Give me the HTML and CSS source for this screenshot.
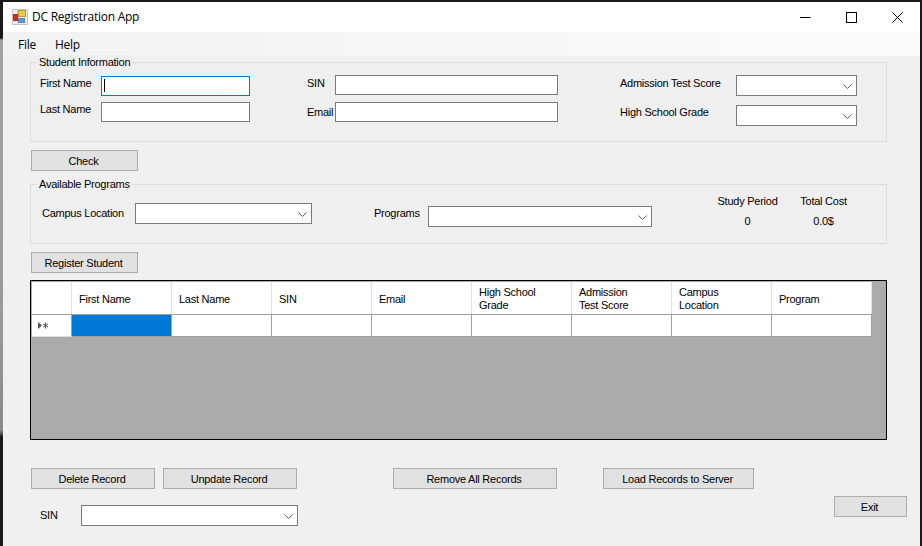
FILE: index.html
```html
<!DOCTYPE html>
<html lang="en">
<head>
<meta charset="utf-8">
<title>DC Registration App</title>
<link rel="stylesheet" href="styles.css">
</head>
<body>
<div class="desktop">
  <div class="strip-left"></div>
  <div class="window">
    <header class="titlebar">
      <svg class="app-icon" width="16" height="16" viewBox="0 0 16 16">
        <path d="M0.500 0.500h15v15h-15zM0.500 5.500h4M5.500 0.500v4M0.500 10.500h4M5.500 15.500v-2" stroke="#c4c4c4" fill="#eee"/>
        <rect x="1.500" y="5.500" width="4" height="6" fill="#d8261c" stroke="#a8302a"/>
        <rect x="6.500" y="1.500" width="7" height="6" fill="#f7c93e" stroke="#b89a3e"/>
        <rect x="6.500" y="9.500" width="6" height="4" fill="#5c9ae0" stroke="#5c86b8"/>
      </svg>
      <span class="app-title">DC Registration App</span>
      <div class="controls">
        <div class="control"><svg width="11" height="11" viewBox="0 0 11 11"><path d="M0 5.500h10.500" stroke="#000" fill="none"/></svg></div>
        <div class="control"><svg width="11" height="11" viewBox="0 0 11 11"><rect x="0.500" y="0.500" width="10" height="10" stroke="#000" fill="none"/></svg></div>
        <div class="control"><svg width="11" height="11" viewBox="0 0 11 11"><path d="M0.500 0.500l10 10M10.500 0.500l-10 10" stroke="#000" fill="none"/></svg></div>
      </div>
    </header>
    <nav class="menubar">
      <span class="menu-item">File</span>
      <span class="menu-item">Help</span>
    </nav>
    <main class="content">
      <section class="group group-student">
        <span class="group-title">Student Information</span>
        <div class="group-body">
          <div class="col col-name">
            <div class="field"><label class="lbl lbl-name">First Name</label><div class="textbox textbox-name is-focused"><span class="caret"></span></div></div>
            <div class="field"><label class="lbl lbl-name">Last Name</label><div class="textbox textbox-name"></div></div>
          </div>
          <div class="col col-contact">
            <div class="field"><label class="lbl lbl-contact lbl-raised">SIN</label><div class="textbox textbox-contact"></div></div>
            <div class="field"><label class="lbl lbl-contact lbl-center">Email</label><div class="textbox textbox-contact"></div></div>
          </div>
          <div class="col col-score">
            <div class="field"><label class="lbl lbl-score lbl-raised">Admission Test Score</label>
              <div class="combo combo-score"><svg class="chev" width="9" height="5" viewBox="0 0 9 5"><path d="M0.500 0.500l4 4 4-4" fill="none" stroke="#5a5a5a"/></svg></div></div>
            <div class="field"><label class="lbl lbl-score">High School Grade</label>
              <div class="combo combo-score"><svg class="chev" width="9" height="5" viewBox="0 0 9 5"><path d="M0.500 0.500l4 4 4-4" fill="none" stroke="#5a5a5a"/></svg></div></div>
          </div>
        </div>
      </section>

      <button class="btn btn-wide btn-check">Check</button>

      <section class="group group-programs">
        <span class="group-title">Available Programs</span>
        <div class="group-body">
          <div class="field field-campus"><label class="lbl lbl-campus">Campus Location</label>
            <div class="combo combo-campus"><svg class="chev" width="9" height="5" viewBox="0 0 9 5"><path d="M0.500 0.500l4 4 4-4" fill="none" stroke="#5a5a5a"/></svg></div></div>
          <div class="field field-programs"><label class="lbl lbl-programs">Programs</label>
            <div class="combo combo-programs"><svg class="chev" width="9" height="5" viewBox="0 0 9 5"><path d="M0.500 0.500l4 4 4-4" fill="none" stroke="#5a5a5a"/></svg></div></div>
          <div class="stat stat-period"><span>Study Period</span><span>0</span></div>
          <div class="stat stat-cost"><span>Total Cost</span><span>0.0$</span></div>
        </div>
      </section>

      <button class="btn btn-wide btn-register">Register Student</button>

      <section class="datagrid">
        <div class="dg-row dg-head">
          <div class="dg-rowhead"></div>
          <div class="dg-col dg-col-single">First Name</div>
          <div class="dg-col dg-col-single">Last Name</div>
          <div class="dg-col dg-col-single">SIN</div>
          <div class="dg-col dg-col-single">Email</div>
          <div class="dg-col">High School<br>Grade</div>
          <div class="dg-col">Admission<br>Test Score</div>
          <div class="dg-col">Campus<br>Location</div>
          <div class="dg-col dg-col-single">Program</div>
        </div>
        <div class="dg-row dg-data">
          <div class="dg-rowhead">
            <svg width="11" height="7" viewBox="0 0 11 7"><path d="M0 0l4 3.500-4 3.500z" fill="#555"/><path d="M7.500 0.500v6M5 2l5 3M10 2l-5 3" stroke="#555" fill="none"/></svg>
          </div>
          <div class="dg-cell is-selected"></div>
          <div class="dg-cell"></div>
          <div class="dg-cell"></div>
          <div class="dg-cell"></div>
          <div class="dg-cell"></div>
          <div class="dg-cell"></div>
          <div class="dg-cell"></div>
          <div class="dg-cell"></div>
        </div>
      </section>

      <div class="actions">
        <button class="btn btn-delete">Delete Record</button>
        <button class="btn btn-update">Unpdate Record</button>
        <button class="btn btn-remove">Remove All Records</button>
        <button class="btn btn-load">Load Records to Server</button>
      </div>

      <div class="footer">
        <div class="field field-sin"><label class="lbl lbl-sin">SIN</label>
          <div class="combo combo-sin"><svg class="chev" width="9" height="5" viewBox="0 0 9 5"><path d="M0.500 0.500l4 4 4-4" fill="none" stroke="#5a5a5a"/></svg></div></div>
        <button class="btn btn-exit">Exit</button>
      </div>
    </main>
  </div>
</div>
</body>
</html>
```
FILE: styles.css
```css
* { box-sizing: border-box; }
html, body { margin: 0; padding: 0; }
body {
  width: 922px;
  height: 546px;
  overflow: hidden;
  background: #1a1a1a;
  font-family: "Liberation Sans", Arial, sans-serif;
  font-size: 11px;
  letter-spacing: -0.25px;
  color: #000;
}
.desktop { display: flex; height: 546px; padding-top: 2px; padding-right: 2px; }
.strip-left {
  width: 3px;
  margin-top: -2px;
  background: linear-gradient(to bottom, #1a1a1a 0, #1a1a1a 38px, #a2a2a2 40px, #9a9a9a 300px, #8a8a8a 430px, #1a1a1a 437px, #1a1a1a 546px);
}
.window { flex: 1; background: #f0f0f0; display: flex; flex-direction: column; }

.titlebar { height: 30px; flex: none; background: #fff; display: flex; align-items: center; padding-left: 9px; }
.app-icon { flex: none; }
.app-title { margin-left: 4px; font-family: "Open Sans", sans-serif; font-size: 12px; line-height: 16px; }
.controls { margin-left: auto; display: flex; height: 30px; }
.control { width: 46px; display: flex; align-items: center; justify-content: center; }

.menubar {
  height: 24px; flex: none; display: flex; align-items: center; padding-left: 15px; gap: 19px;
  background: linear-gradient(to right, #f2f2f2, #fbfbfb);
  font-family: "Open Sans", sans-serif; font-size: 12px;
}

.content { padding: 6px 0 0 27px; }

.group { width: 857px; border: 1px solid #dcdcdc; background: #efefef; }
.group-student { height: 80px; }
.group-programs { height: 60px; margin-top: 13px; }
.group-title {
  display: block; width: fit-content; height: 14px; line-height: 14px;
  margin: -8px 0 0 6px; padding: 0 2px; background: #efefef;
}
.group-body { display: flex; align-items: flex-start; }
.group-student .group-body { padding-left: 9px; }
.group-programs .group-body { padding-left: 11px; }

.col { display: flex; flex-direction: column; }
.col-name { margin-top: 7px; gap: 6px; }
.col-contact { margin-top: 6px; margin-left: 57px; gap: 7px; }
.col-score { margin-top: 6px; margin-left: 62px; gap: 9px; }

.field { display: flex; align-items: flex-start; }
.lbl { display: block; line-height: 14px; white-space: nowrap; flex: none; }
.lbl-name { width: 61px; }
.lbl-contact { width: 28px; }
.lbl-score { width: 116px; }
.lbl-raised { margin-top: 1px; }
.lbl-center { margin-top: 3px; }
.lbl-campus { width: 93px; margin-top: 3px; }
.lbl-programs { width: 54px; }
.lbl-sin { width: 41px; margin-top: 3px; }

.textbox { height: 20px; background: #fff; border: 1px solid #7a7a7a; flex: none; }
.textbox-name { width: 149px; }
.textbox-contact { width: 223px; }
.is-focused { border-color: #0078d7; padding: 2px 0 0 2px; }
.caret { display: block; width: 1px; height: 13px; background: #000; }

.combo { height: 21px; background: #fff; border: 1px solid #7a7a7a; flex: none; display: flex; align-items: center; justify-content: flex-end; padding-right: 4px; }
.chev { display: block; margin-top: 1px; }
.combo-score { width: 121px; }
.combo-campus { width: 177px; }
.combo-programs { width: 224px; }
.combo-sin { width: 217px; }

.field-campus { margin-top: 12px; }
.field-programs { margin-top: 15px; margin-left: 62px; }

.stat { display: flex; flex-direction: column; align-items: center; gap: 6px; margin-top: 3px; line-height: 14px; flex: none; white-space: nowrap; }
.stat-period { width: 59px; margin-left: 66px; }
.stat-cost { width: 47px; margin-left: 23px; }

.btn {
  display: block; height: 21px; padding: 1px 2px 0 0; background: #e1e1e1; border: 1px solid #adadad;
  font: inherit; letter-spacing: inherit; color: #000; text-align: center; line-height: 18px;
}
.btn-wide { width: 107px; margin-left: 1px; }
.btn-check { margin-top: 8px; }
.btn-register { margin-top: 8px; }

.datagrid { width: 857px; height: 160px; margin-top: 7px; border: 1px solid #000; background: #ababab; padding: 1px 0 0 1px; }
.dg-row { display: flex; }
.dg-head { height: 33px; border-bottom: 1px solid #a0a0a0; width: 840px; }
.dg-data { height: 22px; width: 840px; }
.dg-rowhead { width: 40px; flex: none; background: #fff; border-right: 1px solid #e0e0e0; display: flex; align-items: center; padding-left: 6px; }
.dg-data .dg-rowhead { border-bottom: 1px solid #e0e0e0; border-right-color: #a0a0a0; }
.dg-col { width: 100px; flex: none; background: #fff; border-right: 1px solid #e0e0e0; padding: 1px 0 0 7px; display: flex; flex-direction: column; justify-content: center; line-height: 13px; }
.dg-col-single { padding-top: 3px; }
.dg-cell { width: 100px; flex: none; background: #fff; border-right: 1px solid #a0a0a0; border-bottom: 1px solid #a0a0a0; }
.is-selected { background: #0078d7; }

.actions { display: flex; margin-top: 28px; margin-left: 1px; }
.btn-delete { width: 124px; }
.btn-update { width: 134px; margin-left: 8px; }
.btn-remove { width: 164px; margin-left: 96px; }
.btn-load { width: 151px; margin-left: 46px; }

.footer { display: flex; align-items: flex-start; margin-top: 7px; margin-left: 10px; }
.field-sin { margin-top: 9px; }
.btn-exit { width: 73px; margin-left: 536px; }
```
